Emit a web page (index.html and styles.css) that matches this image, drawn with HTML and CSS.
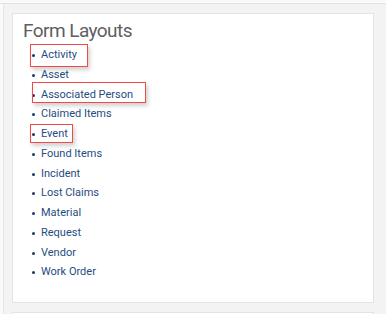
FILE: index.html
```html
<!DOCTYPE html>
<html>
<head>
<meta charset="utf-8">
<link rel="stylesheet" href="styles.css">
</head>
<body>
<div class="topbar"></div>
<div class="main">
  <div class="side"></div>
  <div class="column">
    <div class="card first">
      <h2 class="title">Form Layouts</h2>
      <ul class="list">
        <li class="item"><span class="mark mark-activity"></span>Activity</li>
        <li class="item">Asset</li>
        <li class="item"><span class="mark mark-person"></span>Associated Person</li>
        <li class="item">Claimed Items</li>
        <li class="item"><span class="mark mark-event"></span>Event</li>
        <li class="item">Found Items</li>
        <li class="item">Incident</li>
        <li class="item">Lost Claims</li>
        <li class="item">Material</li>
        <li class="item">Request</li>
        <li class="item">Vendor</li>
        <li class="item">Work Order</li>
      </ul>
    </div>
    <div class="card next"></div>
  </div>
</div>
</body>
</html>
```
FILE: styles.css
```css
html, body {
  margin: 0;
  padding: 0;
}
body {
  background: #f3f3f3;
  font-family: Roboto, "Liberation Sans", sans-serif;
  width: 386px;
  height: 314px;
  overflow: hidden;
}
.topbar {
  height: 3px;
  background: #f9f9f9;
  border-bottom: 1px solid #e2e2e2;
}
.main {
  display: flex;
  height: 310px;
  overflow: hidden;
}
.side {
  width: 3px;
  background: #fafafa;
  border-right: 1px solid #e6e6e6;
  flex: none;
}
.column {
  margin-left: 8px;
  padding-top: 9px;
  width: 362px;
  display: flex;
  flex-direction: column;
  gap: 9px;
  box-sizing: border-box;
}
.card {
  background: #fff;
  border: 1px solid #e3e3e3;
  box-sizing: border-box;
}
.card.first {
  height: 290px;
  flex: none;
  padding: 5px 10px 0 10px;
}
.card.next {
  flex: 1;
  min-height: 0;
  border-bottom: none;
}
.title {
  margin: 0;
  font-weight: 400;
  font-size: 19px;
  letter-spacing: -0.55px;
  line-height: 24px;
  color: #5f5f5f;
}
.list {
  list-style: none;
  margin: 2px 0 0 0;
  padding: 0 0 0 18px;
}
.item {
  position: relative;
  font-size: 11px;
  line-height: 19.75px;
  height: 19.75px;
  color: #1f4c80;
}
.item::before {
  content: "";
  position: absolute;
  left: -9px;
  top: 9px;
  width: 3px;
  height: 3px;
  border-radius: 50%;
  background: #173a66;
}
.mark {
  position: absolute;
  border: 1.3px solid #f24848;
  box-shadow: 2px 3px 4px rgba(0, 0, 0, 0.18);
  box-sizing: border-box;
}
.mark-activity {
  left: -11px;
  top: -1px;
  width: 58px;
  height: 23px;
}
.mark-person {
  left: -9px;
  top: -3px;
  width: 114px;
  height: 21px;
}
.mark-event {
  left: -11px;
  top: 0px;
  width: 43px;
  height: 19px;
}
```
